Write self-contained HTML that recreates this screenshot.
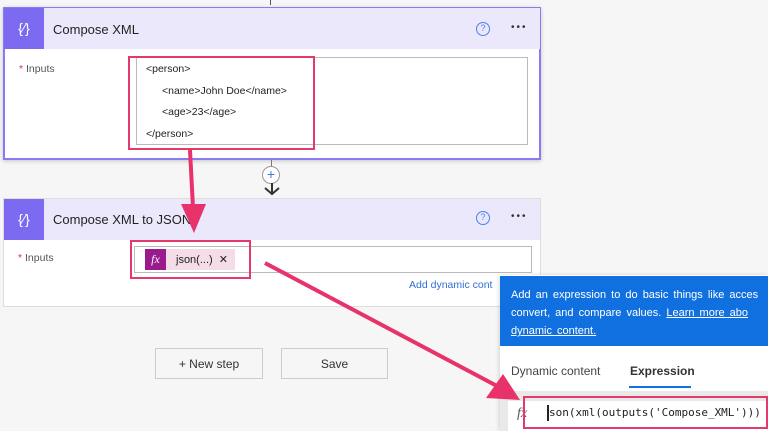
<!DOCTYPE html>
<html><head><style>
*{box-sizing:border-box;margin:0;padding:0}
body{width:768px;height:431px;overflow:hidden;background:#f6f6f6;font-family:"Liberation Sans","DejaVu Sans",sans-serif;position:relative;font-size:11px;color:#222}
.abs{position:absolute}
.card{position:absolute;left:3px;width:538px;background:#fff}
.hdr{position:absolute;left:0;top:0;right:0;height:41px;background:#ece8fc}
.ic{position:absolute;left:0;top:0;width:40px;height:41px;background:#7c6bf0;color:#fff;font-size:14px;text-align:center;line-height:40px}
.title{position:absolute;left:49px;top:13px;font-size:13px;color:#222}
.q{position:absolute;width:14px;height:14px;border:1.5px solid #4c7ff0;border-radius:50%;color:#4c7ff0;font-size:9px;text-align:center;line-height:11px}
.dots{position:absolute;font-size:10px;letter-spacing:2px;color:#333}
.lab{position:absolute;left:14px;font-size:10.5px;color:#555}
.lab b{color:#d3325a;font-weight:normal}
.box{position:absolute;border:1px solid #bbb;background:#fff}
.btn{position:absolute;border:1px solid #ccc;background:#f6f6f6;font-size:12px;text-align:center;line-height:30px;color:#333}
</style></head><body>
<div class="abs" style="left:270px;top:0;width:1px;height:5px;background:#555"></div>

<div class="card" style="top:7px;height:153px;border:2px solid #8a7bf2;box-shadow:0 1px 4px rgba(0,0,0,.2)">
 <div class="hdr" style="left:-1px;top:-1px;right:-1px"></div>
 <div class="ic" style="left:-1px;top:-1px">{∕}</div>
 <div class="title" style="left:48px;top:13px">Compose XML</div>
 <div class="q" style="left:471px;top:13px">?</div>
 <div class="dots" style="left:506px;top:13px">•••</div>
 <div class="lab" style="top:54px"><b>*</b> Inputs</div>
 <div class="box" style="left:131px;top:48px;width:392px;height:88px"></div>
 <div class="abs" style="left:141px;top:50px;font-size:10.5px;line-height:21.5px">&lt;person&gt;<br><span style="padding-left:16px">&lt;name&gt;John Doe&lt;/name&gt;</span><br><span style="padding-left:16px">&lt;age&gt;23&lt;/age&gt;</span><br>&lt;/person&gt;</div>
</div>
<div class="abs" style="left:128px;top:56px;width:187px;height:94px;border:2px solid #e3396b"></div>

<div class="abs" style="left:271px;top:160px;width:1px;height:8px;background:#777"></div>
<div class="abs" style="left:262px;top:166px;width:18px;height:18px;border:1px solid #999;border-radius:50%;background:#fff;color:#3a7ae0;font-size:14px;line-height:15px;text-align:center">+</div>
<svg class="abs" style="left:262px;top:183px" width="20" height="14"><path d="M10 0V11M3 5L10 11L17 5" stroke="#333" stroke-width="2" fill="none"/></svg>

<div class="card" style="top:198px;height:109px;border:1px solid #ddd">
 <div class="hdr"></div>
 <div class="ic">{∕}</div>
 <div class="title">Compose XML to JSON</div>
 <div class="q" style="left:472px;top:12px">?</div>
 <div class="dots" style="left:507px;top:12px">•••</div>
 <div class="lab" style="top:53px"><b>*</b> Inputs</div>
 <div class="box" style="left:130px;top:47px;width:398px;height:27px"></div>
 <div class="abs" style="left:141px;top:50px;width:90px;height:21px;background:#f4dde8"></div>
 <div class="abs" style="left:141px;top:50px;width:21px;height:21px;background:#9a1b8e;color:#fff;font-family:'Liberation Serif',serif;font-style:italic;font-size:12px;text-align:center;line-height:20px">fx</div>
 <div class="abs" style="left:172px;top:54px;font-size:11px">json(...) &nbsp;✕</div>
 <div class="abs" style="left:405px;top:80px;font-size:10.5px;color:#2f6fd8">Add dynamic cont</div>
</div>
<div class="abs" style="left:130px;top:240px;width:121px;height:39px;border:2px solid #e3396b"></div>

<div class="btn" style="left:155px;top:348px;width:108px;height:31px">+ New step</div>
<div class="btn" style="left:281px;top:348px;width:107px;height:31px">Save</div>

<div class="abs" style="left:500px;top:275px;width:268px;height:156px;background:#fff;box-shadow:-1px 0 4px rgba(0,0,0,.15)"></div>
<div class="abs" style="left:500px;top:276px;width:268px;height:70px;background:#1070e0;color:#fff;font-size:11px;line-height:18px;padding:10px 0 0 11px;white-space:nowrap;word-spacing:2px">Add an expression to do basic things like acces<br>convert, and compare values. <u>Learn more abo</u><br><u>dynamic content.</u></div>
<div class="abs" style="left:511px;top:364px;font-size:12px;color:#444">Dynamic content</div>
<div class="abs" style="left:630px;top:364px;font-size:12px;color:#333;font-weight:bold">Expression</div>
<div class="abs" style="left:629px;top:386px;width:62px;height:2px;background:#1070e0"></div>
<div class="abs" style="left:500px;top:391px;width:268px;height:40px;background:#e9e9e9"></div>
<div class="abs" style="left:508px;top:401px;width:260px;height:30px;background:#fff"></div>
<div class="abs" style="left:517px;top:406px;font-family:'Liberation Serif',serif;font-style:italic;color:#555;font-size:14px">fx</div>
<div class="abs" style="left:547px;top:405px;width:2px;height:16px;background:#222"></div>
<div class="abs" style="left:549px;top:406px;font-family:'DejaVu Sans Mono','Liberation Mono',monospace;font-size:11px;color:#222">son(xml(outputs('Compose_XML')))</div>
<div class="abs" style="left:523px;top:396px;width:245px;height:33px;border:2px solid #e3396b"></div>

<svg class="abs" style="left:0;top:0" width="768" height="431">
<line x1="190" y1="150" x2="193" y2="208" stroke="#e8336a" stroke-width="4"/>
<polygon points="181,204 206,204 194,233" fill="#e8336a"/>
<line x1="265" y1="263" x2="497" y2="386" stroke="#e8336a" stroke-width="4"/>
<polygon points="486,398 503,374 520,400" fill="#e8336a"/>
</svg>
</body></html>
